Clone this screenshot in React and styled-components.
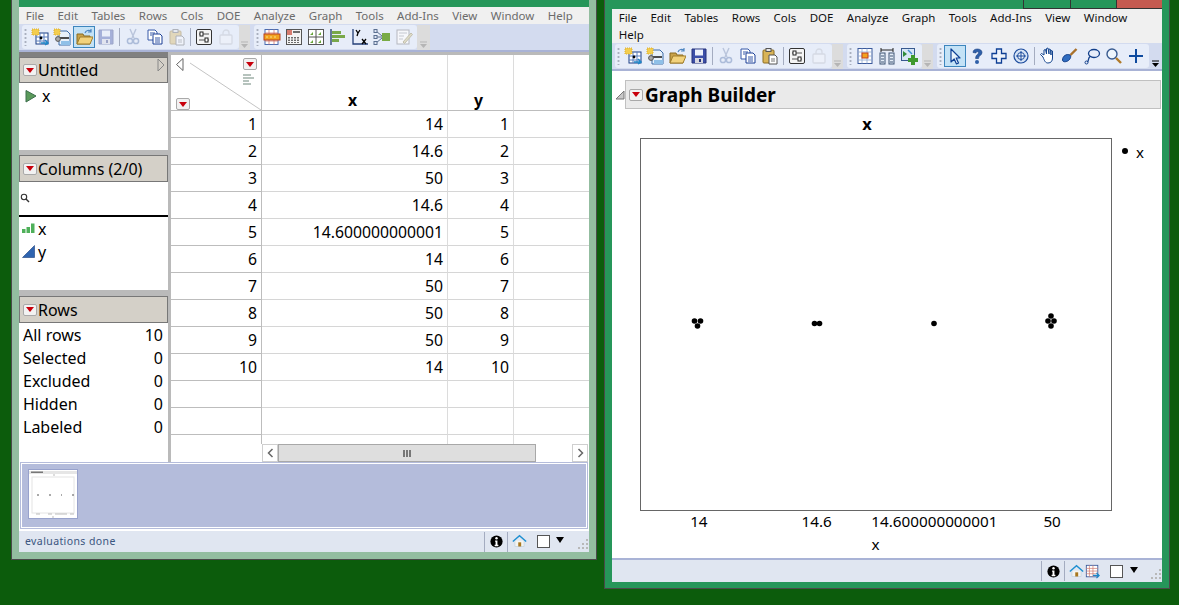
import React from "react";
import styled, { createGlobalStyle } from "styled-components";

const GlobalStyle = createGlobalStyle`
    html, body {
        margin: 0;
        padding: 0;
        background: #0c5c0c;
    }
    body {
        font-family: "Noto Sans", "Open Sans", sans-serif;
        color: #000;
    }
`

const Desktop = styled.div`
    width: 1179px;
    height: 605px;
    overflow: hidden;
    display: flex;
    align-items: flex-start;
    padding-left: 11px;
    gap: 7px;
    box-sizing: border-box;
    background: #0c5c0c;
`

// window frames

const Window = styled.div`
    box-sizing: border-box;
    width: ${(p) => p.$w}px;
    height: ${(p) => p.$h}px;
    flex: none;
    display: flex;
    flex-direction: column;
    border: 1px solid #4a4a4a;
    border-top: 0;
    padding: 0 7px ${(p) => p.$pad}px;
    background: ${(p) => p.$frame};
`

const TitleStrip = styled.div`
    height: ${(p) => p.$h}px;
    flex: none;
    display: flex;
    justify-content: flex-end;
    background: #26965a;
`

const CaptionButton = styled.div`
    box-sizing: border-box;
    width: ${(p) => p.$w}px;
    border-left: 1px solid #333;
    border-bottom: 1px solid #333;
    background: ${(p) => p.$bg || "#26965a"};
`

const Content = styled.div`
    flex: 1;
    min-height: 0;
    display: flex;
    flex-direction: column;
    background: #fff;
`

const MenuBar = styled.div`
    flex: none;
    display: flex;
    flex-wrap: wrap;
    background: #f0f0f0;
    color: ${(p) => (p.$dim ? "#6b6b6b" : "#111")};
    font-size: 11.5px;
    line-height: 17px;
`

const MenuItem = styled.span`
    padding: 0 6.7px;
`

// toolbar

const Toolbar = styled.div`
    flex: none;
    box-sizing: border-box;
    height: 28px;
    display: flex;
    align-items: center;
    padding-left: 3px;
    background: #d3dbef;
    border-bottom: 2px solid #a9b3d6;
`

const ToolGroup = styled.div`
    height: 24px;
    display: flex;
    align-items: center;
    padding-right: 2px;
    border-radius: 3px;
    background: #e7edf9;
`

const Grip = styled.div`
    width: 7px;
    height: 18px;
    flex: none;
    box-sizing: border-box;
    padding-left: 2px;
    background: radial-gradient(circle, #a9b0bf 1px, transparent 1.2px) 2px 0 / 3px 4px repeat-y;
`

const ToolButton = styled.div`
    box-sizing: border-box;
    width: 22px;
    height: 22px;
    flex: none;
    display: flex;
    align-items: center;
    justify-content: center;
    border: 1px solid ${(p) => (p.$active ? "#3d86bd" : "transparent")};
    background: ${(p) => (p.$active ? "#c4e2f6" : "transparent")};
`

const ToolSep = styled.div`
    width: 1px;
    height: 18px;
    flex: none;
    margin: 0 2px;
    background: #a4acc0;
`

const Overflow = styled.div`
    box-sizing: border-box;
    width: ${(p) => p.$w || 11}px;
    height: 25px;
    flex: none;
    margin-right: 4px;
    padding-bottom: 2px;
    display: flex;
    align-items: flex-end;
    justify-content: center;
    background: ${(p) => (p.$dark ? "transparent" : "#dcdcdc")};
`

const IconSvg = styled.svg`
    display: block;
    flex: none;
    opacity: ${(p) => (p.$off ? 0.38 : 1)};
`

// left window body

const Body = styled.div`
    height: 410px;
    flex: none;
    display: flex;
`

const Sidebar = styled.div`
    box-sizing: border-box;
    width: 152px;
    flex: none;
    display: flex;
    flex-direction: column;
    border-right: 3px solid #bababa;
`

const PanelGap = styled.div`
    flex: none;
    height: ${(p) => p.$h}px;
    background: ${(p) => p.$c || "#bababa"};
`

const PanelHeader = styled.div`
    box-sizing: border-box;
    position: relative;
    height: ${(p) => p.$h || 27}px;
    flex: none;
    display: flex;
    align-items: center;
    gap: 1px;
    padding-left: 3px;
    border: 1px solid #777;
    background: #d4d0c8;
    font-size: 16px;
`

const RedButton = styled.span`
    box-sizing: border-box;
    width: 14px;
    height: 12px;
    flex: none;
    display: inline-flex;
    align-items: center;
    justify-content: center;
    border: 1px solid #a9a9a9;
    border-radius: 2px;
    background: #f2f2f2;
    &::after {
        content: "";
        width: 0;
        height: 0;
        border-left: 4.5px solid transparent;
        border-right: 4.5px solid transparent;
        border-top: 5px solid #c8000c;
    }
`

const TablePin = styled.svg`
    position: absolute;
    right: 2px;
    top: 0;
`

const PanelBody = styled.div`
    flex: ${(p) => (p.$h ? "none" : 1)};
    height: ${(p) => (p.$h ? `${p.$h}px` : "auto")};
    box-sizing: border-box;
    padding-top: ${(p) => p.$top || 0}px;
    font-size: 16px;
`

const TableItem = styled.div`
    display: flex;
    align-items: center;
    gap: 4px;
    height: 26px;
    padding-left: 5px;
`

const SearchBox = styled.div`
    box-sizing: border-box;
    height: 35px;
    display: flex;
    align-items: center;
    padding-left: 1px;
    border-bottom: 2px solid #000;
    padding-bottom: 1px;
`

const ColumnItem = styled.div`
    display: flex;
    align-items: center;
    gap: 3px;
    height: 23px;
    padding-left: 3px;
`

const CountRow = styled.div`
    display: flex;
    justify-content: space-between;
    height: 23px;
    line-height: 23px;
    padding: 0 5px 0 4px;
`

// data grid

const GridArea = styled.div`
    flex: 1;
    min-width: 0;
    display: flex;
    flex-direction: column;
    border-top: 3px solid #bababa;
`

const GridRow = styled.div`
    box-sizing: border-box;
    height: ${(p) => p.$h}px;
    flex: none;
    display: flex;
    font-size: 15.75px;
`

const Cell = styled.div`
    box-sizing: border-box;
    width: ${(p) => p.$w}px;
    flex: none;
    display: flex;
    align-items: center;
    justify-content: flex-end;
    padding-right: 4px;
    border-right: 1px solid ${(p) => (p.$num ? "#bdbdbd" : "#dcdcdc")};
    border-bottom: ${(p) => (p.$open ? "0" : `1px solid ${p.$num ? "#bdbdbd" : "#d6d6d6"}`)};
`

const LastCell = styled(Cell)`
    flex: 1;
    border-right: 0;
`

const HeadCell = styled.div`
    box-sizing: border-box;
    width: ${(p) => p.$w}px;
    flex: ${(p) => (p.$w ? "none" : 1)};
    display: flex;
    align-items: flex-end;
    justify-content: center;
    padding-right: 4px;
    font-weight: 700;
    font-size: 15.75px;
    line-height: 19px;
    border-right: ${(p) => (p.$w ? "1px solid #dcdcdc" : "0")};
    border-bottom: 1px solid #bdbdbd;
`

const Corner = styled.div`
    box-sizing: border-box;
    position: relative;
    width: 91px;
    flex: none;
    border-right: 1px solid #bdbdbd;
    border-bottom: 1px solid #bdbdbd;
`

const CornerLine = styled.svg`
    position: absolute;
    inset: 0;
`

const CornerTop = styled(RedButton)`
    position: absolute;
    top: 3px;
    right: 4px;
`

const CornerBottom = styled(RedButton)`
    position: absolute;
    left: 5px;
    bottom: 0;
`

const ScrollRow = styled.div`
    height: 18px;
    flex: none;
    display: flex;
    margin: 0 1px 0 91px;
`

const ScrollButton = styled.div`
    box-sizing: border-box;
    width: 16px;
    flex: none;
    display: flex;
    align-items: center;
    justify-content: center;
    border: 1px solid #cfcfcf;
    background: #fff;
`

const ScrollThumb = styled.div`
    box-sizing: border-box;
    width: 258px;
    flex: none;
    display: flex;
    align-items: center;
    justify-content: center;
    gap: 1px;
    border: 1px solid #a8a8a8;
    background: #dedede;
`

const ThumbGrip = styled.span`
    width: 2px;
    height: 7px;
    background: #777;
`

const ScrollTrack = styled.div`
    flex: 1;
`

// thumbnails and status

const ThumbStrip = styled.div`
    box-sizing: border-box;
    height: 68px;
    flex: none;
    padding: 0 1px;
    background: #fff;
`

const ThumbInner = styled.div`
    box-sizing: border-box;
    height: 67px;
    border: 1px solid #b4bcdb;
    background: #fff;
    padding: 1px;
`

const ThumbFill = styled.div`
    box-sizing: border-box;
    height: 100%;
    padding: 5px 0 0 6px;
    background: #b4bcdb;
`

const Thumb = styled.div`
    box-sizing: border-box;
    width: 50px;
    height: 50px;
    border: 1px solid #98a2cc;
    background: #fff;
`

const StatusBar = styled.div`
    box-sizing: border-box;
    height: ${(p) => p.$h}px;
    flex: none;
    display: flex;
    align-items: center;
    border-top: ${(p) => (p.$rule ? "2px solid #a9b3d6" : "1px solid #fff")};
    background: #e0e6f1;
`

const StatusText = styled.div`
    flex: 1;
    padding: 0 0 2px 6px;
    color: #3a5580;
    font-size: 10.5px;
    letter-spacing: 0.4px;
`

const StatusCell = styled.div`
    box-sizing: border-box;
    width: ${(p) => p.$w}px;
    height: 20px;
    flex: none;
    display: flex;
    align-items: center;
    justify-content: center;
    border-left: 1px solid #a4acc0;
`

const StatusTail = styled.div`
    box-sizing: border-box;
    width: ${(p) => p.$w}px;
    height: 20px;
    flex: none;
    display: flex;
    align-items: center;
    gap: ${(p) => p.$gap || 0}px;
    padding-left: 4px;
    border-left: 1px solid #a4acc0;
`

const CheckBox = styled.span`
    box-sizing: border-box;
    width: 13px;
    height: 13px;
    flex: none;
    margin-left: ${(p) => p.$left}px;
    border: 1px solid #555;
    background: #fff;
`

const DownArrow = styled.span`
    width: 0;
    height: 0;
    flex: none;
    margin: -3px 0 0 ${(p) => p.$left}px;
    border-left: 4.5px solid transparent;
    border-right: 4.5px solid transparent;
    border-top: 6px solid #000;
`

const ResizeGrip = styled.svg`
    margin-left: auto;
    margin-top: 7px;
    flex: none;
`

// graph builder

const ReportHead = styled.div`
    flex: none;
    display: flex;
    align-items: center;
    padding: 9px 1px 0 3px;
`

const Disclosure = styled.svg`
    flex: none;
`

const ReportTitle = styled.div`
    box-sizing: border-box;
    flex: 1;
    height: 29px;
    display: flex;
    align-items: center;
    gap: 2px;
    padding-left: 3px;
    border: 1px solid #c0c0c0;
    background: #eaeaea;
    font-size: 19px;
    font-weight: 700;
`

const GraphTitle = styled.div`
    width: 471px;
    height: 29px;
    margin-left: 28px;
    padding-right: 17px;
    box-sizing: border-box;
    flex: none;
    display: flex;
    align-items: center;
    justify-content: center;
    font-size: 16.5px;
    font-weight: 700;
`

const PlotRow = styled.div`
    flex: none;
    display: flex;
    padding-left: 28px;
`

const Frame = styled.div`
    box-sizing: border-box;
    width: 472px;
    height: 373px;
    flex: none;
    border: 1px solid #666;
`

const PlotSvg = styled.svg`
    display: block;
`

const Legend = styled.div`
    display: flex;
    align-items: center;
    gap: 8px;
    height: 28px;
    margin-left: 10px;
    font-size: 15px;
`

const LegendDot = styled.span`
    width: 6px;
    height: 6px;
    margin-top: -3px;
    border-radius: 50%;
    background: #000;
`

const Ticks = styled.div`
    width: 471px;
    margin-left: 28px;
    flex: none;
    display: grid;
    grid-template-columns: repeat(4, minmax(0, 1fr));
    height: 20px;
    line-height: 20px;
    font-size: 15.25px;
`

const Tick = styled.span`
    display: flex;
    justify-content: center;
    min-width: 0;
    white-space: nowrap;
`

const AxisLabel = styled.div`
    width: 471px;
    margin-left: 28px;
    height: 27px;
    line-height: 27px;
    flex: none;
    text-align: center;
    font-size: 15.25px;
`

const Spacer = styled.div`
    flex: 1;
`

const glyphs = {
    newTable: (
        <>
            <rect x="5" y="5" width="12" height="11" fill="#fff" stroke="#1b3f86" />
            <path d="M5 9h12M5 13h12M9 5v11M13 5v11" stroke="#5a7fbe" />
            <rect x="1" y="1" width="7" height="6" fill="#f3cd4f" stroke="#dcae2e" strokeDasharray="1 1" />
            <circle cx="10" cy="10" r="1.4" fill="#000" />
            <path d="M10 15h7M14 12l3 3-3 2" stroke="#1e87c8" strokeWidth="1.4" fill="none" />
        </>
    ),
    newScript: (
        <>
            <path d="M6 3h8l3 3v11H6z" fill="#e8f1fb" stroke="#3d6ca8" />
            <path d="M8 13h9v4H8z" fill="#8fc0e8" />
            <rect x="1" y="1" width="6" height="6" fill="#f3cd4f" stroke="#dcae2e" strokeDasharray="1 1" />
            <path d="M6 10h10" stroke="#222" strokeWidth="1.6" />
            <circle cx="5" cy="11" r="2.4" fill="#aaa" stroke="#555" />
        </>
    ),
    open: (
        <>
            <path d="M2 6h6l1 2h6v8H2z" fill="#c9a24a" stroke="#8a6a20" />
            <path d="M2 16l3-7h13l-3 7z" fill="#f2d27c" stroke="#a17f2c" />
            <path d="M10 5c1-3 4-3 6-2M16 1v3h-3" stroke="#4f86c0" strokeWidth="1.2" fill="none" />
        </>
    ),
    save: (
        <>
            <path d="M2 2h14v14H2z" fill="#3c4fa8" stroke="#26337a" />
            <rect x="5" y="2.5" width="8" height="6" fill="#eef2fb" />
            <rect x="5" y="11" width="8" height="5" fill="#d8d8e0" />
            <rect x="9" y="12" width="2" height="3" fill="#26337a" />
        </>
    ),
    cut: (
        <>
            <path d="M6 1l4 9M12 1L8 10" stroke="#6f83ab" strokeWidth="1.4" />
            <circle cx="6" cy="13" r="2.6" fill="none" stroke="#4f6ea8" strokeWidth="1.5" />
            <circle cx="12" cy="13" r="2.6" fill="none" stroke="#4f6ea8" strokeWidth="1.5" />
        </>
    ),
    copy: (
        <>
            <path d="M2 2h7l2 2v8H2z" fill="#fff" stroke="#3659a8" />
            <path d="M7 6h7l2 2v8H7z" fill="#fff" stroke="#1b3f96" />
            <path d="M4 5h5M4 7h2M9 10h5M9 12h5M9 14h5" stroke="#3659a8" />
        </>
    ),
    paste: (
        <>
            <rect x="2" y="3" width="11" height="13" rx="1" fill="#d9b458" stroke="#8c6c20" />
            <rect x="5" y="1.5" width="5" height="3" fill="#e6e6e6" stroke="#555" />
            <path d="M8 8h6l2 2v7H8z" fill="#fff" stroke="#555" />
            <path d="M10 12h4M10 14h4" stroke="#777" />
        </>
    ),
    settings: (
        <>
            <rect x="1.5" y="1.5" width="15" height="15" rx="1.5" fill="#f5f5f5" stroke="#333" />
            <path d="M4 6h10M4 12h10" stroke="#555" />
            <rect x="5" y="4" width="3" height="4" fill="#fff" stroke="#222" />
            <rect x="10" y="10" width="3" height="4" fill="#fff" stroke="#222" />
        </>
    ),
    lock: (
        <>
            <rect x="3" y="7" width="12" height="9" rx="1" fill="#f6f7fb" stroke="#b9bcc4" strokeWidth="1.3" />
            <path d="M6 7V5a3 3 0 0 1 6 0v2" fill="none" stroke="#b9bcc4" strokeWidth="1.3" />
        </>
    ),
    sortTable: (
        <>
            <rect x="2" y="1.5" width="13" height="15" fill="#fff" stroke="#4a6cb0" />
            <path d="M2 5h13M2 9h13M2 13h13M6 1.5v15M11 1.5v15" stroke="#d07a70" strokeWidth="0.8" />
            <rect x="1" y="6" width="16" height="6" fill="#f2a21e" stroke="#b9411f" />
            <path d="M3 9h2M7 9h2M11 9h2" stroke="#f8e08a" />
        </>
    ),
    calc: (
        <>
            <rect x="1.5" y="1.5" width="15" height="15" fill="#f4f4f4" stroke="#555" />
            <rect x="2" y="2" width="5" height="5" fill="#d77c70" />
            <path d="M8 4h7" stroke="#333" strokeWidth="1.4" />
            <path d="M4 9v6M7 9v6M10 9v6M13 9v6" stroke="#333" strokeWidth="1.4" strokeDasharray="1.5 1" />
        </>
    ),
    panels: (
        <>
            <rect x="1.5" y="1.5" width="15" height="15" fill="#fff" stroke="#555" />
            <path d="M9 1.5v15M1.5 9h15" stroke="#555" />
            <path d="M3 7l3-3v3zM11 7l3-3v3zM3 15l3-3v3zM11 15l3-3v3z" fill="#69a63a" />
        </>
    ),
    bars: (
        <>
            <path d="M2 1v16" stroke="#1f3a66" strokeWidth="1.3" />
            <path d="M3 3h9v3H3zM3 7h13v3H3zM3 11h7v3H3z" fill="#79a84a" />
        </>
    ),
    axes: (
        <>
            <path d="M2 1v15h15" fill="none" stroke="#243f78" strokeWidth="1.3" />
            <path d="M5 2l2 3 2-3M7 5l-1 3" stroke="#000" strokeWidth="1.3" fill="none" />
            <path d="M11 11l4 5M15 11l-4 5" stroke="#000" strokeWidth="1.3" />
        </>
    ),
    nodes: (
        <>
            <path d="M3 3l6 5M3 9h6M3 15l6-5" stroke="#5a6f90" />
            <rect x="1" y="1.5" width="3" height="3" fill="#dfe6f4" stroke="#5a6f90" />
            <rect x="1" y="7.5" width="3" height="3" fill="#dfe6f4" stroke="#5a6f90" />
            <rect x="1" y="13.5" width="3" height="3" fill="#dfe6f4" stroke="#5a6f90" />
            <rect x="9" y="5" width="8" height="8" fill="#79ab45" />
        </>
    ),
    pencilDoc: (
        <>
            <rect x="2" y="2" width="12" height="14" fill="#f6f7fb" stroke="#b5b8c0" />
            <path d="M4 5h8M4 8h5M4 11h4" stroke="#c5c8d0" />
            <path d="M8 14l8-9 1.5 1.5-8 9z" fill="#dfdcc8" stroke="#c2bfae" />
        </>
    ),
    photoTable: (
        <>
            <rect x="2" y="1.5" width="14" height="15" fill="#fff" stroke="#3b5a9c" />
            <path d="M2 5h14M2 9h14M2 13h14M6 1.5v15M11 1.5v15" stroke="#8ea7d0" strokeWidth="0.8" />
            <rect x="6" y="6" width="6" height="5" fill="#f2a21e" stroke="#c2401f" />
        </>
    ),
    columns: (
        <>
            <path d="M3 3h12M3 1v4M15 1v4" stroke="#222" />
            <rect x="2" y="6" width="5" height="11" fill="#e4edf8" stroke="#3f5474" />
            <rect x="11" y="6" width="5" height="11" fill="#e4edf8" stroke="#3f5474" />
            <path d="M3 9h3M3 12h3M3 15h3M12 9h3M12 12h3M12 15h3" stroke="#3f5474" />
        </>
    ),
    imagePlus: (
        <>
            <rect x="1.5" y="1.5" width="13" height="12" fill="#d7e7f7" stroke="#38598f" />
            <path d="M3 4l4 3-4 3z" fill="#2e8b3a" />
            <path d="M8 3l4 4" stroke="#3e8bd0" strokeWidth="1.5" />
            <path d="M11 8h4v3h3v4h-3v3h-4v-3H8v-4h3z" fill="#3f9a2f" />
        </>
    ),
    arrow: (
        <path d="M5 2v13l3.2-3 2.3 5 2-1-2.3-5H14z" fill="#e9f3fb" stroke="#0e3f95" strokeWidth="1.2" strokeLinejoin="round" />
    ),
    question: (
        <>
            <path d="M5 5.5C5 3 7 2 9.5 2S14 3.4 14 5.5c0 3-3.5 3-3.5 6H7.6c0-4 3-4 3-6 0-1-2.6-1.2-2.6.5z" fill="#2f5fa8" stroke="#1a3f80" strokeWidth="0.6" />
            <circle cx="9" cy="15" r="2" fill="#2f5fa8" />
        </>
    ),
    cross: (
        <path d="M6.5 2h5v4.5H16v5h-4.5V16h-5v-4.5H2v-5h4.5z" fill="#eef3fb" stroke="#0e3f95" strokeWidth="1.3" />
    ),
    target: (
        <>
            <circle cx="9" cy="9" r="7" fill="#d6e3f5" stroke="#1b4b9c" strokeWidth="1.2" />
            <circle cx="9" cy="9" r="3.5" fill="#eef3fb" stroke="#1b4b9c" />
            <path d="M9 4v10M4 9h10" stroke="#1b4b9c" />
        </>
    ),
    hand: (
        <path d="M4 10L1.5 7.5l1-1L5 8V3l1.5-.5L7.5 7V1.5L9 1l1 6V2l1.5.5L12 8V3.5l1.500.5V11c0 3-1.500 5-4.500 5-2.500 0-3.500-2-5-6z" fill="#fff" stroke="#13448f" strokeWidth="1" strokeLinejoin="round" />
    ),
    brush: (
        <>
            <path d="M1.5 13c0-4 4-6.500 7.500-5 1.500 1 .5 4-1.500 5.500-2 1.500-6 2-6-.5z" fill="#2f6cc0" stroke="#123f8a" />
            <path d="M9.5 8L15.5 2" stroke="#a9712a" strokeWidth="2.4" />
        </>
    ),
    lasso: (
        <>
            <ellipse cx="11" cy="6.5" rx="5.5" ry="4" fill="none" stroke="#123f8a" strokeWidth="1.3" />
            <path d="M7 9.5C5 11 6 13 4.5 15" fill="none" stroke="#123f8a" strokeWidth="1.3" />
            <circle cx="3.5" cy="15.5" r="1.5" fill="none" stroke="#123f8a" />
        </>
    ),
    magnifier: (
        <>
            <circle cx="7" cy="7" r="5" fill="#eef5fc" stroke="#385a8f" strokeWidth="1.4" />
            <path d="M11 11l5 5" stroke="#b07a28" strokeWidth="2.4" />
        </>
    ),
    plus: <path d="M9 2v14M2 9h14" stroke="#0e4a9e" strokeWidth="2" />,
    info: (
        <>
            <circle cx="8" cy="8" r="6.5" fill="#000" />
            <circle cx="8" cy="4.5" r="1.3" fill="#fff" />
            <path d="M6.5 7H9v4.5h1V13H6v-1.5h1V8.3h-.5z" fill="#fff" />
        </>
    ),
    home: (
        <>
            <path d="M3.5 8v7h11V8" fill="#f4f4f0" stroke="#c5d4e2" />
            <path d="M1 9l8-7 8 7" fill="none" stroke="#1d8fd1" strokeWidth="1.7" />
            <rect x="7.5" y="10" width="3.5" height="5" fill="#a8771f" />
        </>
    ),
    tableMini: (
        <>
            <rect x="1.5" y="1.5" width="13" height="13" fill="#fff" stroke="#3b5a9c" />
            <path d="M1.5 5h13M1.5 8h13M1.5 11h13M5 1.5v13M9 1.5v13" stroke="#d07a70" strokeWidth="0.8" />
            <path d="M9 13h7M13 10l3 3-3 3" stroke="#1e87c8" strokeWidth="1.4" fill="none" />
        </>
    ),
    playGreen: <path d="M2 1.5L12 7 2 13z" fill="#5b9a5b" stroke="#3c6e4c" />,
    searchMini: (
        <>
            <circle cx="4" cy="4" r="2.7" fill="none" stroke="#333" strokeWidth="1.1" />
            <path d="M6 6l3 3" stroke="#333" strokeWidth="1.4" />
        </>
    ),
    ordinal: <path d="M0 11h3.5V7H0zM4.5 11H8V5H4.5zM9 11h3.5V1.5H9z" fill="#4fb05a" />,
    continuous: <path d="M12.5 .5v12H.5z" fill="#2f64b0" stroke="#1d3f7c" strokeWidth="0.6" />,
}

const Icon = ({ name, size = 18, box = 18, off }) => (
    <IconSvg width={size} height={size} viewBox={`0 0 ${box} ${box}`} $off={off}>
        {glyphs[name]}
    </IconSvg>
)

const Tool = ({ name, off, active }) => (
    <ToolButton $active={active}>
        <Icon name={name} off={off} />
    </ToolButton>
)

const OverflowMark = ({ dark }) => (
    <svg width="9" height="7" viewBox="0 0 9 7">
        <path d="M1 1h7" stroke={dark ? "#000" : "#b5b5b5"} />
        <path d="M1 3h7L4.5 7z" fill={dark ? "#000" : "#b5b5b5"} />
    </svg>
)

const Grain = () => (
    <ResizeGrip width="12" height="12" viewBox="0 0 12 12">
        <path d="M9 0h2v2H9zM9 4h2v2H9zM5 4h2v2H5zM9 8h2v2H9zM5 8h2v2H5zM1 8h2v2H1z" fill="#b8b8b8" />
    </ResizeGrip>
)

const menus = ["File", "Edit", "Tables", "Rows", "Cols", "DOE", "Analyze", "Graph", "Tools", "Add-Ins", "View", "Window", "Help"]

const Menu = ({ dim }) => (
    <MenuBar $dim={dim}>
        {menus.map((m) => (
            <MenuItem key={m}>{m}</MenuItem>
        ))}
    </MenuBar>
)

const FileTools = ({ openActive, saveOff, pasteOff }) => (
    <ToolGroup>
        <Grip />
        <Tool name="newTable" />
        <Tool name="newScript" />
        <Tool name="open" active={openActive} />
        <Tool name="save" off={saveOff} />
        <ToolSep />
        <Tool name="cut" off />
        <Tool name="copy" />
        <Tool name="paste" off={pasteOff} />
        <ToolSep />
        <Tool name="settings" />
        <Tool name="lock" off />
    </ToolGroup>
)

const rowData = [
    ["14", "1"],
    ["14.6", "2"],
    ["50", "3"],
    ["14.6", "4"],
    ["14.600000000001", "5"],
    ["14", "6"],
    ["50", "7"],
    ["50", "8"],
    ["50", "9"],
    ["14", "10"],
    ["", ""],
    ["", ""],
]

const counts = [
    ["All rows", 10],
    ["Selected", 0],
    ["Excluded", 0],
    ["Hidden", 0],
    ["Labeled", 0],
]

const DataTableWindow = () => (
    <Window $w={586} $h={560} $pad={7} $frame="#93bda0">
        <TitleStrip $h={7} />
        <Content>
            <Menu dim />
            <Toolbar>
                <FileTools openActive saveOff pasteOff />
                <Overflow><OverflowMark /></Overflow>
                <ToolGroup>
                    <Grip />
                    <Tool name="sortTable" />
                    <Tool name="calc" />
                    <Tool name="panels" />
                    <Tool name="bars" />
                    <Tool name="axes" />
                    <Tool name="nodes" />
                    <Tool name="pencilDoc" />
                </ToolGroup>
                <Overflow $w={13}><OverflowMark /></Overflow>
            </Toolbar>
            <Body>
                <Sidebar>
                    <PanelGap $h={5} $c="#808080" />
                    <PanelHeader $h={26}>
                        <RedButton />
                        Untitled
                        <TablePin width="8" height="14" viewBox="0 0 8 14">
                            <path d="M1 1l6 6-6 6z" fill="none" stroke="#888" />
                        </TablePin>
                    </PanelHeader>
                    <PanelBody $h={67}>
                        <TableItem>
                            <Icon name="playGreen" size={14} box={14} />x
                        </TableItem>
                    </PanelBody>
                    <PanelGap $h={5} />
                    <PanelHeader>
                        <RedButton />
                        Columns (2/0)
                    </PanelHeader>
                    <PanelBody $h={108}>
                        <SearchBox>
                            <Icon name="searchMini" size={10} box={10} />
                        </SearchBox>
                        <ColumnItem>
                            <Icon name="ordinal" size={13} box={13} />x
                        </ColumnItem>
                        <ColumnItem>
                            <Icon name="continuous" size={13} box={13} />y
                        </ColumnItem>
                    </PanelBody>
                    <PanelGap $h={6} />
                    <PanelHeader>
                        <RedButton />
                        Rows
                    </PanelHeader>
                    <PanelBody $top={1}>
                        {counts.map(([label, n]) => (
                            <CountRow key={label}>
                                <span>{label}</span>
                                <span>{n}</span>
                            </CountRow>
                        ))}
                    </PanelBody>
                </Sidebar>
                <GridArea>
                    <GridRow $h={56}>
                        <Corner>
                            <CornerLine width="90" height="55" viewBox="0 0 90 55">
                                <path d="M19 8L90 55" stroke="#c4c4c4" />
                                <path d="M12 3.5L5.5 9.5l6.5 6z" fill="#fff" stroke="#666" />
                                <path d="M72 20h8M72 23h11M72 26h6M72 29h8" stroke="#9fb0a8" strokeWidth="1.5" />
                            </CornerLine>
                            <CornerTop />
                            <CornerBottom />
                        </Corner>
                        <HeadCell $w={186}>x</HeadCell>
                        <HeadCell $w={66}>y</HeadCell>
                        <HeadCell />
                    </GridRow>
                    {rowData.map(([x, y], i) => (
                        <GridRow $h={27} key={i}>
                            <Cell $w={91} $num>{x ? i + 1 : ""}</Cell>
                            <Cell $w={186}>{x}</Cell>
                            <Cell $w={66}>{y}</Cell>
                            <LastCell />
                        </GridRow>
                    ))}
                    <GridRow $h={9}>
                        <Cell $w={91} $num $open />
                        <Cell $w={186} $open />
                        <Cell $w={66} $open />
                        <LastCell $open />
                    </GridRow>
                    <ScrollRow>
                        <ScrollButton>
                            <svg width="7" height="10" viewBox="0 0 7 10"><path d="M5.5 1L1.5 5l4 4" fill="none" stroke="#666" strokeWidth="1.5" /></svg>
                        </ScrollButton>
                        <ScrollThumb>
                            <ThumbGrip />
                            <ThumbGrip />
                            <ThumbGrip />
                        </ScrollThumb>
                        <ScrollTrack />
                        <ScrollButton>
                            <svg width="7" height="10" viewBox="0 0 7 10"><path d="M1.5 1l4 4-4 4" fill="none" stroke="#666" strokeWidth="1.5" /></svg>
                        </ScrollButton>
                    </ScrollRow>
                </GridArea>
            </Body>
            <ThumbStrip>
                <ThumbInner>
                    <ThumbFill>
                        <Thumb>
                            <svg width="48" height="48" viewBox="0 0 48 48">
                                <rect x="0" y="1" width="48" height="3" fill="#e6e6e6" />
                                <rect x="2" y="1.5" width="12" height="1.5" fill="#777" />
                                <rect x="3" y="7" width="42" height="36" fill="#fff" stroke="#e4e4e4" />
                                <path d="M8 25h2M20 25h2M32 25h1M43 25h2" stroke="#555" />
                                <path d="M7 44h4M19 44h4M26 44h12M41 44h4M23 47h2M24 5h2" stroke="#bbb" />
                            </svg>
                        </Thumb>
                    </ThumbFill>
                </ThumbInner>
            </ThumbStrip>
            <StatusBar $h={22}>
                <StatusText>evaluations done</StatusText>
                <StatusCell $w={23}><Icon name="info" size={15} box={16} /></StatusCell>
                <StatusTail $w={82}>
                    <Icon name="home" size={15} />
                    <CheckBox $left={10} />
                    <DownArrow $left={6} />
                    <Grain />
                </StatusTail>
            </StatusBar>
        </Content>
    </Window>
)

const ticks = ["14", "14.6", "14.600000000001", "50"]

// points read off the chart, relative to the frame's inside corner
const points = [
    [53.5, 182], [59.5, 182], [56.5, 187],
    [173.5, 184.5], [178.5, 184.5],
    [293, 184.5],
    [410, 177], [407, 182], [413, 182], [410, 187],
]

const GraphWindow = () => (
    <Window $w={566} $h={589} $pad={6} $frame="#26965a">
        <TitleStrip $h={9}>
            <CaptionButton $w={47} />
            <CaptionButton $w={46} />
            <CaptionButton $w={46} $bg="#c55a50" />
        </TitleStrip>
        <Content>
            <Menu />
            <Toolbar>
                <FileTools />
                <Overflow><OverflowMark /></Overflow>
                <ToolGroup>
                    <Grip />
                    <Tool name="photoTable" />
                    <Tool name="columns" />
                    <Tool name="imagePlus" />
                </ToolGroup>
                <Overflow><OverflowMark /></Overflow>
                <ToolGroup>
                    <Grip />
                    <Tool name="arrow" active />
                    <Tool name="question" />
                    <Tool name="cross" />
                    <Tool name="target" />
                    <ToolSep />
                    <Tool name="hand" />
                    <Tool name="brush" />
                    <Tool name="lasso" />
                    <Tool name="magnifier" />
                    <Tool name="plus" />
                </ToolGroup>
                <Overflow $w={13} $dark><OverflowMark dark /></Overflow>
            </Toolbar>
            <ReportHead>
                <Disclosure width="10" height="10" viewBox="0 0 10 10">
                    <path d="M9 1v8H1z" fill="#c8c8c8" stroke="#777" />
                </Disclosure>
                <ReportTitle>
                    <RedButton />
                    Graph Builder
                </ReportTitle>
            </ReportHead>
            <GraphTitle>x</GraphTitle>
            <PlotRow>
                <Frame>
                    <PlotSvg width="470" height="371" viewBox="0 0 470 371">
                        {points.map(([cx, cy], i) => (
                            <circle key={i} cx={cx} cy={cy} r="2.8" fill="#000" />
                        ))}
                    </PlotSvg>
                </Frame>
                <Legend>
                    <LegendDot />x
                </Legend>
            </PlotRow>
            <Ticks>
                {ticks.map((t) => (
                    <Tick key={t}>{t}</Tick>
                ))}
            </Ticks>
            <AxisLabel>x</AxisLabel>
            <Spacer />
            <StatusBar $h={24} $rule>
                <Spacer />
                <StatusCell $w={23}><Icon name="info" size={15} box={16} /></StatusCell>
                <StatusTail $w={98} $gap={1}>
                    <Icon name="home" size={15} />
                    <Icon name="tableMini" size={15} box={17} />
                    <CheckBox $left={9} />
                    <DownArrow $left={6} />
                    <Grain />
                </StatusTail>
            </StatusBar>
        </Content>
    </Window>
)

export default function App() {
    return (
        <Desktop>
            <GlobalStyle />
            <DataTableWindow />
            <GraphWindow />
        </Desktop>
    )
}
